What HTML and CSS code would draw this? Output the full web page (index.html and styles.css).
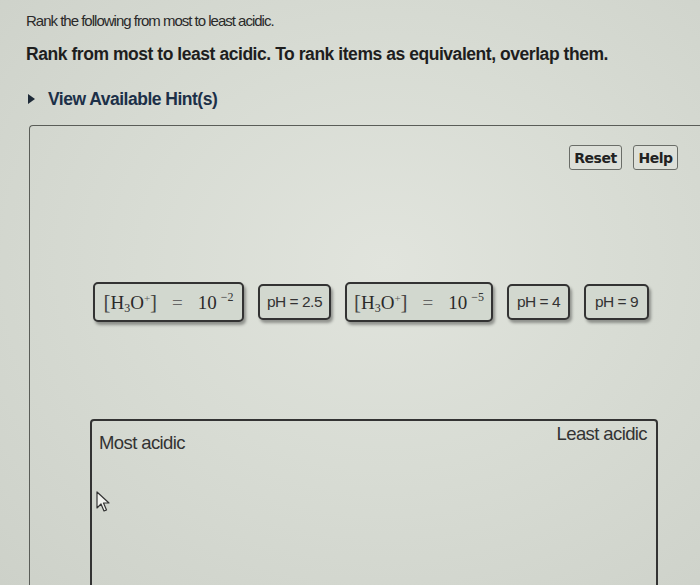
FILE: index.html
```html
<!DOCTYPE html>
<html>
<head>
<meta charset="utf-8">
<link rel="stylesheet" href="styles.css">
</head>
<body>
<div class="page">
  <p class="intro">Rank the following from most to least acidic.</p>
  <p class="instr">Rank from most to least acidic. To rank items as equivalent, overlap them.</p>
  <div class="hints"><span class="tri"></span><span class="hint-text">View Available Hint(s)</span></div>
  <div class="panel">
    <div class="toolbar">
      <button class="btn btn-reset">Reset</button>
      <button class="btn btn-help">Help</button>
    </div>
    <div class="items">
      <div class="item math i1"><span class="expr"><span class="br">[</span>H<sub>3</sub>O<sup>+</sup><span class="br">]</span><span class="eq">=</span>10<sup class="exp">−2</sup></span></div>
      <div class="item ph i2">pH = 2.5</div>
      <div class="item math i3"><span class="expr"><span class="br">[</span>H<sub>3</sub>O<sup>+</sup><span class="br">]</span><span class="eq">=</span>10<sup class="exp">−5</sup></span></div>
      <div class="item ph i4">pH = 4</div>
      <div class="item ph i5">pH = 9</div>
    </div>
    <div class="target">
      <div class="target-head">
        <span class="most">Most acidic</span>
        <span class="least">Least acidic</span>
      </div>
      <svg class="cursor" width="14" height="22" viewBox="0 0 14 22"><path d="M1 1 L1 17 L5 13 L8 20 L10.5 19 L7.5 12 L13 12 Z" fill="#f2f3ef" stroke="#333" stroke-width="1.2" stroke-linejoin="round"/></svg>
    </div>
  </div>
</div>
</body>
</html>
```
FILE: styles.css
```css
html, body {
  margin: 0;
  padding: 0;
  height: 100%;
  overflow: hidden;
}
body {
  background: radial-gradient(ellipse at 55% 45%, #e1e4dd 0%, #d8dcd4 45%, #cdd1c9 100%);
  font-family: "Liberation Sans", Arial, sans-serif;
  color: #222;
}
.page {
  padding: 12px 0 0 26px;
}
.intro {
  margin: 0;
  font-size: 15px;
  line-height: 18px;
  letter-spacing: -1px;
  color: #2a2a2a;
}
.instr {
  margin: 15px 0 0 0;
  font-size: 17.5px;
  line-height: 18px;
  font-weight: bold;
  letter-spacing: -0.45px;
  color: #1e1e1e;
}
.hints {
  margin-top: 27px;
  display: flex;
  align-items: center;
  height: 18px;
}
.tri {
  width: 0;
  height: 0;
  border-top: 5px solid transparent;
  border-bottom: 5px solid transparent;
  border-left: 7px solid #1e2a38;
  margin: 0 13px 0 2px;
}
.hint-text {
  font-size: 17.5px;
  font-weight: bold;
  letter-spacing: -0.5px;
  color: #1c3048;
}
.panel {
  margin-top: 17px;
  margin-left: 3px;
  margin-right: -40px;
  height: 600px;
  border-top: 1px solid #5a5d58;
  border-left: 1px solid #5a5d58;
  border-top-left-radius: 4px;
  box-sizing: border-box;
}
.toolbar {
  display: flex;
  justify-content: flex-end;
  gap: 11px;
  padding: 19px 62px 0 0;
}
.btn {
  font-family: "DejaVu Sans", Verdana, sans-serif;
  font-weight: bold;
  font-size: 14px;
  letter-spacing: -0.5px;
  color: #222;
  background: #dde0d9;
  border: 1px solid #6a6d68;
  border-radius: 3px;
  height: 25px;
  padding: 0;
}
.btn-reset { width: 53px; }
.btn-help { width: 45px; }
.items {
  display: flex;
  align-items: center;
  gap: 14px;
  margin-top: 112px;
  padding-left: 63px;
}
.item {
  box-sizing: border-box;
  border: 2px solid #333;
  border-radius: 5px;
  background: #d2d8cf;
  box-shadow: 2px 3px 3px rgba(0, 0, 0, 0.35);
  display: flex;
  align-items: center;
  justify-content: center;
  color: #333;
}
.math {
  font-family: "Liberation Serif", "Times New Roman", serif;
  font-size: 19px;
  height: 40px;
  color: #2a2a2a;
}
.expr {
  white-space: nowrap;
  line-height: 20px;
}
.math sub {
  font-size: 12px;
  vertical-align: -3px;
}
.math sup {
  font-size: 11px;
  vertical-align: 7px;
  color: #555;
}
.math .exp {
  font-size: 12px;
  vertical-align: 8px;
  margin-left: 4px;
  color: #333;
}
.br {
  font-size: 21px;
  color: #444;
}
.eq {
  margin: 0 15px;
  color: #666;
}
.ph {
  font-family: "Liberation Sans", Arial, sans-serif;
  font-size: 15.5px;
  height: 36px;
  letter-spacing: -0.5px;
}
.i1 { width: 151px; }
.i2 { width: 73px; }
.i3 { width: 148px; }
.i4 { width: 63px; }
.i5 { width: 65px; }
.target {
  margin-top: 97px;
  margin-left: 60px;
  width: 568px;
  height: 200px;
  box-sizing: border-box;
  border: 2px solid #333;
  border-radius: 4px;
  position: relative;
}
.target-head {
  display: flex;
  justify-content: space-between;
  align-items: flex-start;
  padding: 2px 9px 0 7px;
  font-size: 18.5px;
  letter-spacing: -0.6px;
  color: #333;
}
.most { padding-top: 9px; }
.cursor {
  position: absolute;
  left: 4px;
  top: 70px;
}
```
